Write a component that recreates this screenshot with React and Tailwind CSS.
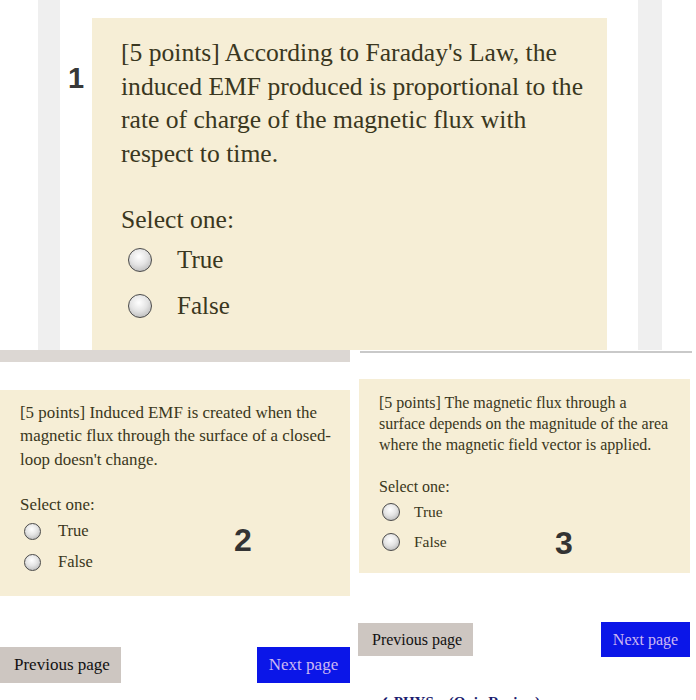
import React from 'react';

const serif = "font-['Liberation_Serif','Times_New_Roman',serif]";
const sans = "font-['Liberation_Sans',Arial,sans-serif]";

function Radio({ size }) {
  return (
    <span
      className={`inline-block shrink-0 rounded-full border-[1.5px] border-[#4a4a4a] bg-[radial-gradient(circle_at_45%_35%,#ffffff_0%,#e4e4e4_45%,#a9a9a9_100%)] ${size}`}
    />
  );
}

function Option({ label, rowClass, radioSize, gapClass }) {
  return (
    <div className={`flex items-center ${rowClass}`}>
      <Radio size={radioSize} />
      <span className={gapClass}>{label}</span>
    </div>
  );
}

function NavButtons({ prevClass, nextClass, wrapClass }) {
  return (
    <div className={`flex items-center justify-between ${serif} ${wrapClass}`}>
      <button type="button" className={`flex items-center bg-[#cdc6c1] text-[#111] ${prevClass}`}>
        Previous page
      </button>
      <button type="button" className={`flex items-center justify-center bg-[#0b16e8] text-[#cdb8f2] ${nextClass}`}>
        Next page
      </button>
    </div>
  );
}

export default function App() {
  return (
    <div className="relative h-[700px] w-[696px] overflow-hidden bg-white text-[#3a3720]">
      {/* screenshot 1 */}
      <div className="flex h-[350px]">
        <div className="w-[38px]" />
        <div className="w-[22px] bg-[#efefef]" />
        <div className={`w-[32px] pt-[64px] text-center text-[29px] leading-none font-bold text-[#383838] ${sans}`}>1</div>
        <div className={`mt-[18px] w-[515px] bg-[#f6eed6] pl-[29px] pt-[18px] ${serif}`}>
          <p className="text-[25.6px] leading-[33.7px]">
            [5 points] According to Faraday's Law, the
            <br />
            induced EMF produced is proportional to the
            <br />
            rate of charge of the magnetic flux with
            <br />
            respect to time.
          </p>
          <p className="mt-[32px] text-[25.6px] leading-[34px]">Select one:</p>
          <Option label="True" rowClass="h-[46px] pl-[7px] text-[25px]" radioSize="h-[24px] w-[24px]" gapClass="ml-[25px]" />
          <Option label="False" rowClass="h-[46px] pl-[7px] text-[25px]" radioSize="h-[24px] w-[24px]" gapClass="ml-[25px]" />
        </div>
        <div className="w-[31px]" />
        <div className="w-[24px] bg-[#efefef]" />
      </div>

      <div className="flex">
        {/* screenshot 2 */}
        <div className="w-[350px]">
          <div className="h-[12px] bg-[#dcd7d3]" />
          <div className={`relative mt-[28px] h-[206px] bg-[#f6eed6] pl-[20px] pt-[11px] ${serif}`}>
            <p className="text-[16.9px] leading-[23.3px]">
              [5 points] Induced EMF is created when the
              <br />
              magnetic flux through the surface of a closed-
              <br />
              loop doesn't change.
            </p>
            <p className="mt-[22px] text-[16.9px] leading-[23px]">Select one:</p>
            <Option label="True" rowClass="h-[31px] pl-[4px] text-[16.5px]" radioSize="h-[17px] w-[17px]" gapClass="ml-[17px]" />
            <Option label="False" rowClass="h-[31px] pl-[4px] text-[16.5px]" radioSize="h-[17px] w-[17px]" gapClass="ml-[17px]" />
            <span className={`absolute left-[234px] top-[134px] text-[32px] leading-none font-bold text-[#333] ${sans}`}>2</span>
          </div>
          <NavButtons
            wrapClass="mt-[51px] text-[17px]"
            prevClass="h-[36px] w-[121px] pl-[14px]"
            nextClass="h-[36px] w-[93px]"
          />
        </div>

        {/* screenshot 3 */}
        <div className="w-[346px]">
          <div className="ml-[10px] mr-[4px] mt-px h-[1.5px] bg-[#c9c9c9]" />
          <div className={`relative ml-[9px] mr-[6px] mt-[26.5px] h-[194px] bg-[#f6eed6] pl-[20px] pt-[12.5px] ${serif}`}>
            <p className="text-[16px] leading-[21px]">
              [5 points] The magnetic flux through a
              <br />
              surface depends on the magnitude of the area
              <br />
              where the magnetic field vector is applied.
            </p>
            <p className="mt-[21px] text-[16px] leading-[21px]">Select one:</p>
            <Option label="True" rowClass="h-[30px] pl-[3px] text-[15.5px]" radioSize="h-[18px] w-[18px]" gapClass="ml-[14px]" />
            <Option label="False" rowClass="h-[30px] pl-[3px] text-[15.5px]" radioSize="h-[18px] w-[18px]" gapClass="ml-[14px]" />
            <span className={`absolute left-[196px] top-[148px] text-[32px] leading-none font-bold text-[#333] ${sans}`}>3</span>
          </div>
          <NavButtons
            wrapClass="ml-[8px] mr-[6px] mt-[49px] text-[16px]"
            prevClass="h-[33px] w-[115px] pl-[14px]"
            nextClass="h-[35px] w-[89px]"
          />
          <p className={`ml-[27px] mt-[38px] text-[15px] font-bold leading-none text-[#1c1c6e] ${serif}`}>
            ✓ PHYS &nbsp;&nbsp; (Quiz Review)
          </p>
        </div>
      </div>
    </div>
  );
}
